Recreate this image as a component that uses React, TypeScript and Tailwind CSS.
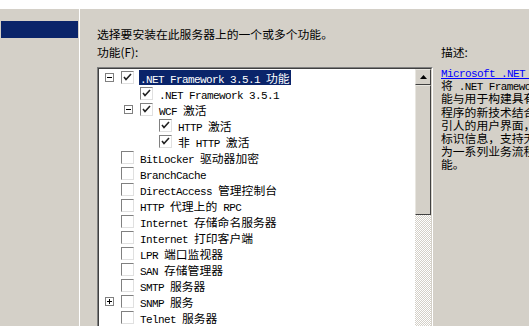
import React from "react";

interface Feature {
  label: string;
  level: number;
  exp?: "-" | "+";
  checked?: boolean;
  selected?: boolean;
}

const features: Feature[] = [
  { label: ".NET Framework 3.5.1 功能", level: 0, exp: "-", checked: true, selected: true },
  { label: ".NET Framework 3.5.1", level: 1, checked: true },
  { label: "WCF 激活", level: 1, exp: "-", checked: true },
  { label: "HTTP 激活", level: 2, checked: true },
  { label: "非 HTTP 激活", level: 2, checked: true },
  { label: "BitLocker 驱动器加密", level: 0 },
  { label: "BranchCache", level: 0 },
  { label: "DirectAccess 管理控制台", level: 0 },
  { label: "HTTP 代理上的 RPC", level: 0 },
  { label: "Internet 存储命名服务器", level: 0 },
  { label: "Internet 打印客户端", level: 0 },
  { label: "LPR 端口监视器", level: 0 },
  { label: "SAN 存储管理器", level: 0 },
  { label: "SMTP 服务器", level: 0 },
  { label: "SNMP 服务", level: 0, exp: "+" },
  { label: "Telnet 服务器", level: 0 },
  { label: "Telnet 客户端", level: 0 },
];

const description = [
  "将 .NET Framework 2.0 API 的强大功",
  "能与用于构建具有吸引力的应用",
  "程序的新技术结合起来，这些应用",
  "引人的用户界面，保护客户的个人",
  "标识信息，支持无缝而安全的通信",
  "为一系列业务流程建模提供支持的",
  "能。",
];

const CJK = /[\u3000-\u303f\u4e00-\u9fff\uff00-\uffef]/;

// latin in a mono face, CJK in Noto, like NSimSun does it
function Mixed({ text }: { text: string }) {
  const parts = text.split(/([\u3000-\u303f\u4e00-\u9fff\uff00-\uffef]+)/);
  return (
    <>
      {parts.map((p, i) =>
        !p ? null : CJK.test(p) ? (
          <span key={i} className="font-['Noto_Sans_CJK_SC',sans-serif] text-[11.8px]">
            {p}
          </span>
        ) : (
          <span key={i} className="font-['Liberation_Mono',monospace] text-[11px] tracking-[-0.6px]">
            {p}
          </span>
        )
      )}
    </>
  );
}

function Expander({ kind }: { kind?: "-" | "+" }) {
  if (!kind) return <div className="w-[9px] h-[9px] ml-[6px] shrink-0" />;
  return (
    <div className="relative w-[9px] h-[9px] ml-[6px] shrink-0 border border-[#808080] bg-white">
      <div className="absolute left-[1px] top-[3px] w-[5px] h-[1px] bg-black" />
      {kind === "+" && <div className="absolute left-[3px] top-[1px] w-[1px] h-[5px] bg-black" />}
    </div>
  );
}

function Checkbox({ checked }: { checked?: boolean }) {
  return (
    <div className="w-[13px] h-[13px] ml-[7px] shrink-0 border border-t-[#808080] border-l-[#808080] border-b-[#e0e0e0] border-r-[#e0e0e0] bg-white flex items-center justify-center">
      {checked && (
        <svg width="9" height="9" viewBox="0 0 9 9">
          <path d="M1 4 L3 6.5 L8 1" fill="none" stroke="#222" strokeWidth="1.6" />
        </svg>
      )}
    </div>
  );
}

export default function App() {
  return (
    <div className="w-[529px] h-[326px] overflow-hidden bg-white flex flex-col text-black">
      {/* top strip */}
      <div className="h-[9px] shrink-0 bg-white" />

      <div className="flex flex-1 min-h-0">
        {/* left nav */}
        <div className="w-[79px] shrink-0 bg-[#d4d0c8] pt-[12px]">
          <div className="ml-[1px] w-[77px] h-[17px] bg-[#0a246a]" />
        </div>
        <div className="w-[1px] shrink-0 bg-white" />

        {/* main */}
        <div className="flex-1 min-w-0 bg-[#d4d0c8] pl-[17px] pt-[18px] overflow-hidden">
          <div className="font-['Noto_Sans_CJK_SC',sans-serif] text-[11.8px] leading-[14px] whitespace-nowrap">
            选择要安装在此服务器上的一个或多个功能。
          </div>

          <div className="flex mt-[4px]">
            <div className="w-[336px] shrink-0">
              <div className="font-['Noto_Sans_CJK_SC',sans-serif] text-[11.8px] leading-[14px]">功能(F):</div>

              {/* list box */}
              <div className="mt-[8px] border border-t-[#808080] border-l-[#808080] border-b-white border-r-white">
                <div className="h-[270px] flex border border-t-[#404040] border-l-[#404040] border-b-[#d4d0c8] border-r-[#d4d0c8] bg-white">
                  <div className="flex-1 min-w-0 overflow-hidden">
                    {features.map((f, i) => (
                      <div
                        key={i}
                        className="h-[16px] flex items-center whitespace-pre"
                        style={{ paddingLeft: f.level * 19 }}
                      >
                        <Expander kind={f.exp} />
                        <Checkbox checked={f.checked} />
                        <div
                          className={
                            "ml-[5px] h-[15px] px-[1px] leading-[15px] " +
                            (f.selected ? "bg-[#0a246a] text-white" : "")
                          }
                        >
                          <Mixed text={f.label} />
                        </div>
                      </div>
                    ))}
                  </div>

                  {/* scrollbar */}
                  <div className="w-[16px] shrink-0 flex flex-col bg-[repeating-conic-gradient(#d4d0c8_0_25%,#ffffff_0_50%)] bg-[length:2px_2px]">
                    <div className="h-[16px] shrink-0 bg-[#d4d0c8] border border-t-[#e8e6e0] border-l-[#e8e6e0] border-b-[#404040] border-r-[#404040] flex items-center justify-center">
                      <svg width="7" height="4" viewBox="0 0 7 4">
                        <path d="M3.5 0 L7 4 L0 4 Z" fill="#000" />
                      </svg>
                    </div>
                    <div className="h-[130px] shrink-0 bg-[#d4d0c8] border border-t-[#e8e6e0] border-l-[#e8e6e0] border-b-[#404040] border-r-[#404040]" />
                  </div>
                </div>
              </div>
            </div>

            {/* description */}
            <div className="ml-[8px] flex-1 min-w-0 overflow-hidden whitespace-pre">
              <div className="font-['Noto_Sans_CJK_SC',sans-serif] text-[11.8px] leading-[14px]">描述:</div>
              <div className="mt-[6px] leading-[13.2px]">
                <div className="h-[13.2px] text-[#0000ff] underline">
                  <Mixed text="Microsoft .NET Framework 3.5.1" />
                </div>
                {description.map((line, i) => (
                  <div key={i} className="h-[13.2px]">
                    <Mixed text={line} />
                  </div>
                ))}
              </div>
            </div>
          </div>
        </div>
      </div>
    </div>
  );
}
